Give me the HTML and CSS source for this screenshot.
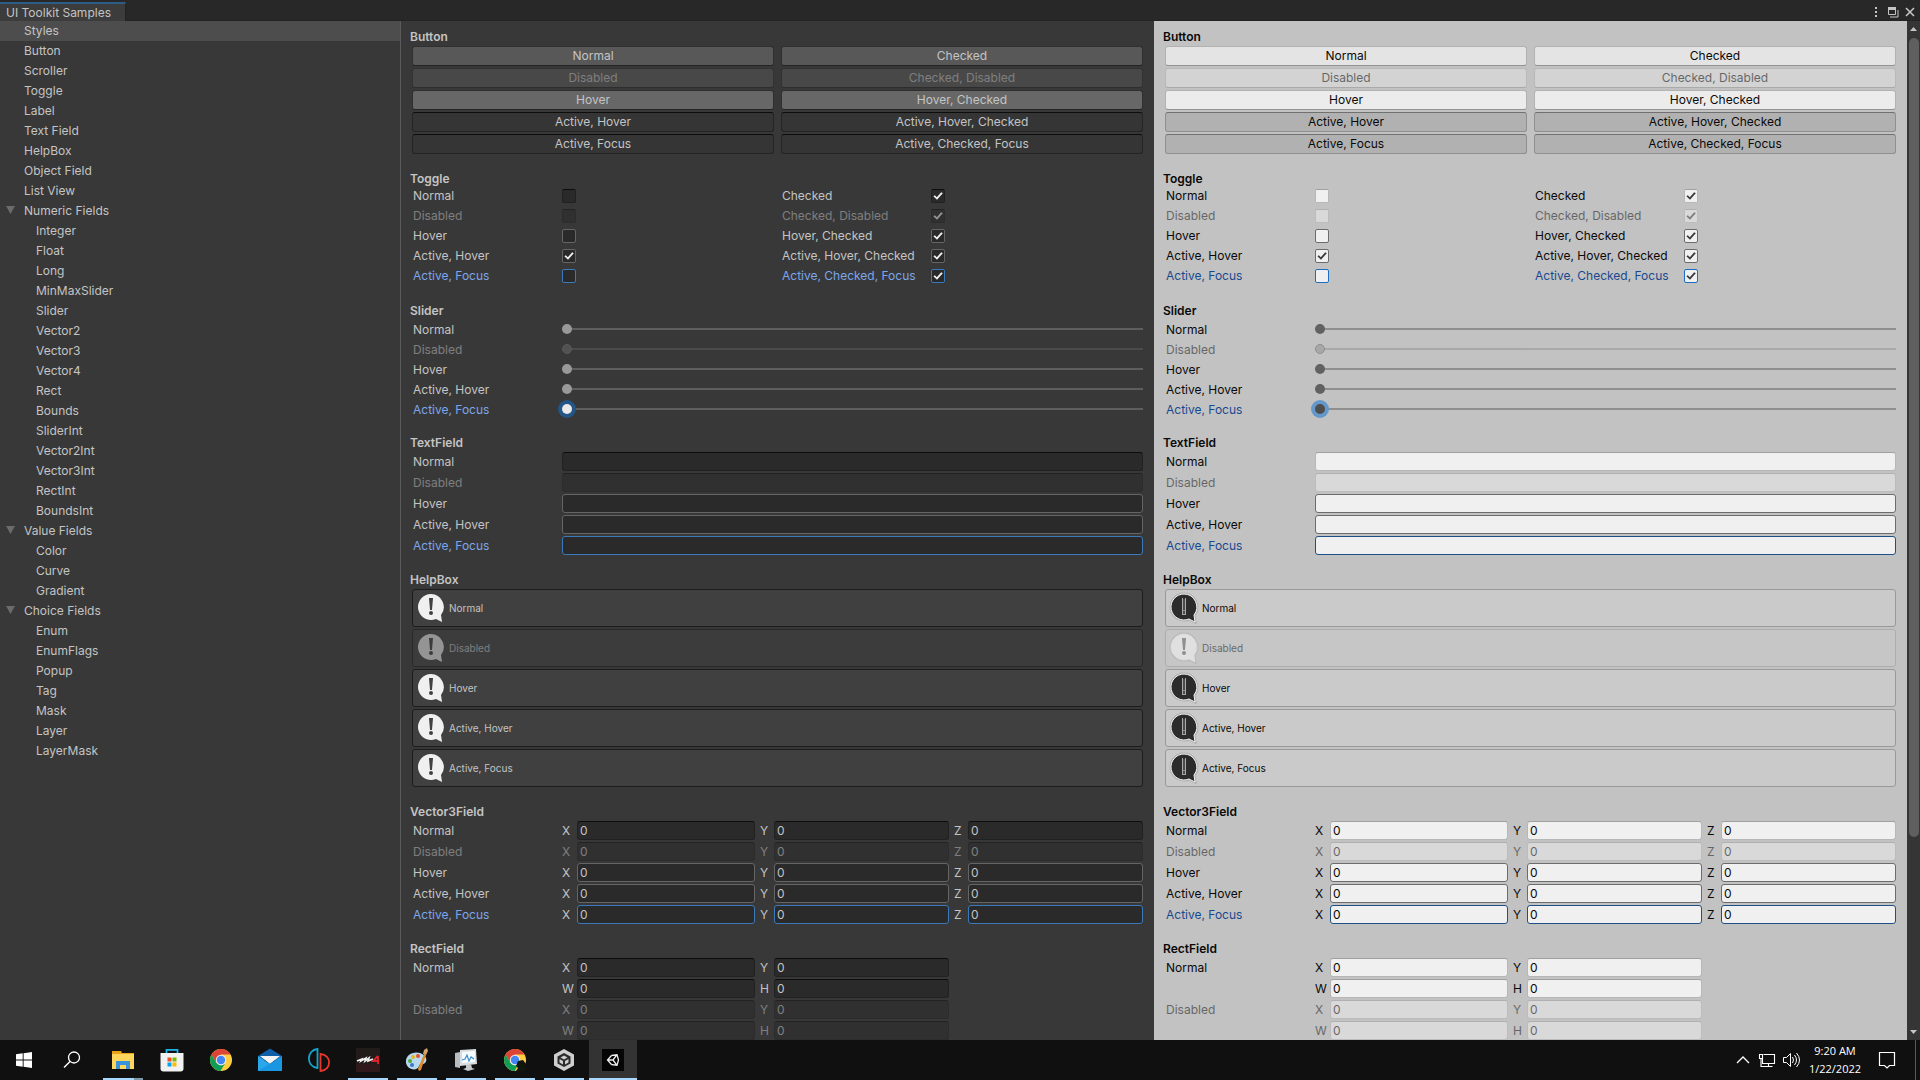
FILE: index.html
```html
<!doctype html>
<html lang="en">
<head>
    <meta charset="UTF-8">
    <meta name="viewport" content="width=device-width, initial-scale=1.0">
    <title>UI Toolkit Samples</title>
    <link rel="stylesheet" href="styles.css">
</head>
<body>
<header class="titlebar">
    <h1 class="tab">UI Toolkit Samples</h1>
    <div class="window_buttons">
        <button type="button" aria-label="Menu"><svg width="14" height="14" viewBox="0 0 14 14"><path d="M6 2h2v2H6zM6 6h2v2H6zM6 10h2v2H6z" fill="#c4c4c4"/></svg></button>
        <button type="button" aria-label="Maximize"><svg width="14" height="14" viewBox="0 0 14 14"><path d="M2.5 3v6.5h7V3M12 5v7H4" fill="none" stroke="#c4c4c4"/><path d="M2 2h8v3H2z" fill="#c4c4c4"/></svg></button>
        <button type="button" aria-label="Close"><svg width="14" height="14" viewBox="0 0 14 14"><path d="M3 3l8 8M11 3l-8 8" fill="none" stroke="#c4c4c4" stroke-width="1.6"/></svg></button>
    </div>
</header>

<main class="window">
    <nav class="tree">
        <ul>
            <li><a href="#styles" class="selected">Styles</a></li>
            <li><a href="#button">Button</a></li>
            <li><a href="#scroller">Scroller</a></li>
            <li><a href="#toggle">Toggle</a></li>
            <li><a href="#label">Label</a></li>
            <li><a href="#textfield">Text Field</a></li>
            <li><a href="#helpbox">HelpBox</a></li>
            <li><a href="#objectfield">Object Field</a></li>
            <li><a href="#listview">List View</a></li>
            <li>
                <a href="#numeric" class="group">Numeric Fields</a>
                <ul>
                    <li><a href="#integer">Integer</a></li>
                    <li><a href="#float">Float</a></li>
                    <li><a href="#long">Long</a></li>
                    <li><a href="#minmaxslider">MinMaxSlider</a></li>
                    <li><a href="#slider">Slider</a></li>
                    <li><a href="#vector2">Vector2</a></li>
                    <li><a href="#vector3">Vector3</a></li>
                    <li><a href="#vector4">Vector4</a></li>
                    <li><a href="#rect">Rect</a></li>
                    <li><a href="#bounds">Bounds</a></li>
                    <li><a href="#sliderint">SliderInt</a></li>
                    <li><a href="#vector2int">Vector2Int</a></li>
                    <li><a href="#vector3int">Vector3Int</a></li>
                    <li><a href="#rectint">RectInt</a></li>
                    <li><a href="#boundsint">BoundsInt</a></li>
                </ul>
            </li>
            <li>
                <a href="#value" class="group">Value Fields</a>
                <ul>
                    <li><a href="#color">Color</a></li>
                    <li><a href="#curve">Curve</a></li>
                    <li><a href="#gradient">Gradient</a></li>
                </ul>
            </li>
            <li>
                <a href="#choice" class="group">Choice Fields</a>
                <ul>
                    <li><a href="#enum">Enum</a></li>
                    <li><a href="#enumflags">EnumFlags</a></li>
                    <li><a href="#popup">Popup</a></li>
                    <li><a href="#tag">Tag</a></li>
                    <li><a href="#mask">Mask</a></li>
                    <li><a href="#layer">Layer</a></li>
                    <li><a href="#layermask">LayerMask</a></li>
                </ul>
            </li>
        </ul>
    </nav>

    <div class="panel dark"></div>
    <div class="panel light"></div>

    <div class="scroller">
        <button type="button" class="up" aria-label="Scroll up"></button>
        <div class="track"><div class="thumb"></div></div>
        <button type="button" class="down" aria-label="Scroll down"></button>
    </div>
</main>

<footer class="taskbar">
    <div class="apps">
        <button type="button" aria-label="Start"><svg width="24" height="24" viewBox="0 0 24 24"><path d="M4 6.300l6.700-1v6.200H4zM11.600 5.200L20 4v7.500h-8.400zM4 12.500h6.700v6.200L4 17.700zM11.600 12.500H20V20l-8.400-1.200z" fill="#fff"/></svg></button>
        <button type="button" class="search" aria-label="Search"><svg width="24" height="24" viewBox="0 0 24 24"><circle cx="14" cy="9.500" r="5.500" fill="none" stroke="#fff" stroke-width="1.300"/><path d="M10 13.500l-6 6" stroke="#fff" stroke-width="1.500"/></svg></button>
        <button type="button" class="open stacked" aria-label="File Explorer"><svg width="24" height="24" viewBox="0 0 24 24"><path d="M1 3h9l1 2h12v15H1z" fill="#e8a317"/><path d="M1 6h22v15H1z" fill="#ffd65c"/><path d="M5 21v-8h14v8h-4v-4H9v4z" fill="#3b92d8"/></svg></button>
        <button type="button" aria-label="Store"><svg width="24" height="24" viewBox="0 0 24 24"><path d="M6.500 5V1.800h11V5" fill="none" stroke="#1fb2ec" stroke-width="1.800"/><path d="M.5 5h23v15.500q0 3-3 3h-17q-3 0-3-3z" fill="#f1f1f1"/><path d="M7.500 9.500h4v4h-4z" fill="#f25022"/><path d="M12.500 9.500h4v4h-4z" fill="#7fba00"/><path d="M7.500 14.500h4v4h-4z" fill="#00a4ef"/><path d="M12.500 14.500h4v4h-4z" fill="#ffb900"/></svg></button>
        <button type="button" aria-label="Chrome"><svg width="24" height="24" viewBox="0 0 24 24"><circle cx="12" cy="12" r="11" fill="#ffcd40"/><path d="M2.500 6.500A11 11 0 0 1 21.500 6.500H12L7.200 14.700z" fill="#db4437"/><path d="M2.500 6.500L7.200 14.700 12 17.500 16 15.500 11.500 23A11 11 0 0 1 2.500 6.500z" fill="#0f9d58"/><circle cx="12" cy="12" r="5.200" fill="#eee"/><circle cx="12" cy="12" r="4.200" fill="#4285f4"/></svg></button>
        <button type="button" aria-label="Mail"><svg width="26" height="24" viewBox="0 0 26 24"><path d="M1 8L13 .500 25 8v4H1z" fill="#0f5ea8"/><path d="M3 8h20l-10 8z" fill="#f3f3f3"/><path d="M1 8l12 8 12-8v15H1z" fill="#28a8ea"/><path d="M1 23L25 8v15z" fill="#1490df" opacity=".7"/></svg></button>
        <button type="button" aria-label="Joy"><svg width="24" height="26" viewBox="0 0 24 26"><path d="M10.500 2v19C-1 20-1 3 10.500 2z" fill="none" stroke="#15a5c9" stroke-width="1.800"/><path d="M13.500 7v17C25 23 25 8 13.500 7z" fill="none" stroke="#e8352b" stroke-width="1.800"/></svg></button>
        <button type="button" class="open" aria-label="Game"><svg width="24" height="24" viewBox="0 0 24 24"><path d="M0 0h24v24H0z" fill="#211b1a"/><path d="M0 16h24v8H0z" fill="#30191a"/><path d="M1 13l5-2-1 2 5-3-1 3 4-3-1 3 5-2" fill="none" stroke="#f2f2f2" stroke-width="1.600"/><path d="M22 8v8M22 8l-5 5h6" fill="none" stroke="#e0222b" stroke-width="1.800"/></svg></button>
        <button type="button" class="open" aria-label="Paint"><svg width="24" height="24" viewBox="0 0 24 24"><path d="M1 15C0 7 8 3 15 5c6 2 8 7 5 10-2 2-5 0-6 3-1 5-11 5-13-3z" fill="#b7d9f0"/><circle cx="5" cy="13" r="2" fill="#4fa83d"/><circle cx="8" cy="9" r="2" fill="#e6b422"/><circle cx="13" cy="8" r="2" fill="#e2512c"/><circle cx="7" cy="17" r="2" fill="#3c79c8"/><path d="M13 21L19 6l2 1-5 15-2 1z" fill="#e08a2c"/><path d="M18 6l1-4 3-2 1 3-2 4z" fill="#cfa46b"/></svg></button>
        <button type="button" class="open" aria-label="Monitor"><svg width="24" height="24" viewBox="0 0 24 24"><path d="M1 5l5-1v16l-5-1z" fill="#b9bdc1"/><path d="M6 2l16-1 1 15-17 2z" fill="#d9dde0"/><path d="M8 4l13-1v11L8 15z" fill="#f6fbff"/><path d="M8 12l3-1 2-4 2 6 2-4 3 2" fill="none" stroke="#3c8fce" stroke-width="1.200"/><path d="M12 17l5-1 1 4 3 1-7 2-5-2 3-1z" fill="#c5c9cc"/></svg></button>
        <button type="button" class="open" aria-label="Chrome profile"><svg width="24" height="24" viewBox="0 0 24 24"><circle cx="12" cy="12" r="11" fill="#ffcd40"/><path d="M2.500 6.500A11 11 0 0 1 21.500 6.500H12L7.200 14.700z" fill="#db4437"/><path d="M2.500 6.500L7.200 14.700 12 17.500 16 15.500 11.500 23A11 11 0 0 1 2.500 6.500z" fill="#0f9d58"/><circle cx="12" cy="12" r="5.200" fill="#eee"/><circle cx="12" cy="12" r="4.200" fill="#4285f4"/><path d="M13 18l2-5 5-1 3 4-1 7h-9l2-3z" fill="#12160f"/></svg></button>
        <button type="button" class="open" aria-label="Unity Hub"><svg width="24" height="24" viewBox="0 0 24 24"><path d="M12 1l10 5.500v11L12 23 2 17.500v-11z" fill="#cfcfcf"/><path d="M12 5l6.500 3.500v7L12 19l-6.500-3.500v-7z" fill="#2b2b2b"/><path d="M12 7.500l3.500 2L12 11.500l-3.500-2zM7.500 11l3.500 2v3.500l-3.500-2zM16.500 11v3.500l-3.500 2V13z" fill="#cfcfcf"/></svg></button>
        <button type="button" class="open current" aria-label="Unity"><svg width="24" height="24" viewBox="0 0 24 24"><path d="M1 1h22v22H1z" fill="#050505"/><path d="M10.500 7.500L6.500 12l4 4.500M10.500 7.500l5.500-.8 1.500 5.300-1.500 5.300-5.500-.8M6.500 12H12l4-5.300M12 12l4 5.300" fill="none" stroke="#eee" stroke-width="1.300"/></svg></button>
    </div>
    <div class="tray">
        <button type="button" aria-label="Show hidden icons"><svg width="24" height="24" viewBox="0 0 24 24"><path d="M6 15l6-6 6 6" fill="none" stroke="#fff" stroke-width="1.300"/></svg></button>
        <button type="button" aria-label="Network"><svg width="24" height="24" viewBox="0 0 24 24"><path d="M8.500 6.500h11v9h-12v-5M4.500 6.500h3v4h-3zM6 10v8.500h8M13.500 15.500v3M9.500 18.500h8" fill="none" stroke="#fff" stroke-width="1.100"/></svg></button>
        <button type="button" aria-label="Volume"><svg width="24" height="24" viewBox="0 0 24 24"><path d="M4.500 9.500h3l4-4v13l-4-4h-3zM13.500 9q2 3 0 6M15.500 7q4 5 0 10M17.500 5q6 7 0 14" fill="none" stroke="#fff"/></svg></button>
        <div class="clock"><time>9:20 AM</time><time>1/22/2022</time></div>
        <button type="button" class="notes" aria-label="Notifications"><svg width="24" height="24" viewBox="0 0 24 24"><path d="M4.500 4.500h15v13h-5l-2.500 2.500-2.500-2.500h-5z" fill="none" stroke="#fff" stroke-width="1.200"/></svg></button>
    </div>
</footer>

<script src="samples.js"></script>
</body>
</html>
```
FILE: samples.js
```js
const states = ['Normal', 'Disabled', 'Hover', 'Active, Hover', 'Active, Focus'];
const checkedStates = ['Checked', 'Checked, Disabled', 'Hover, Checked', 'Active, Hover, Checked', 'Active, Checked, Focus'];

// "Active, Hover" -> "active hover"
function stateClass(name) {
    return name.toLowerCase().replace(/,/g, '');
}

function disabled(name) {
    return name.includes('Disabled') ? ' disabled' : '';
}

function section(title, rows, kind) {
    return `<section class="sample ${kind}"><h2>${title}</h2><div class="rows">${rows.join('')}</div></section>`;
}

function button(name) {
    return `<button type="button" class="btn ${stateClass(name)}"${disabled(name)}>${name}</button>`;
}

function toggle(name) {
    const checked = name.includes('Checked') || name === 'Active, Hover' ? ' checked' : '';
    return `<label class="field ${stateClass(name)}"><span>${name}</span><input type="checkbox"${checked}${disabled(name)}></label>`;
}

function slider(name) {
    return `<label class="field ${stateClass(name)}"><span>${name}</span><input type="range" min="0" max="10" value="0"${disabled(name)}></label>`;
}

function textField(name) {
    return `<label class="field ${stateClass(name)}"><span>${name}</span><input type="text"${disabled(name)}></label>`;
}

function helpBox(name) {
    const bubble = 'M16 2a13 13 0 1 0 5 25l6 3-1-7A13 13 0 0 0 16 2z';
    return `<div class="help ${stateClass(name)}">
        <svg width="32" height="32" viewBox="0 0 32 32">
            <path class="bubble_edge" d="${bubble}"/>
            <path class="bubble" d="${bubble}"/>
            <path class="mark" d="M14 6h4l-1 12h-2z"/>
            <circle class="mark" cx="16" cy="21" r="2"/>
            <path class="bars" d="M14.5 6v17M17.500 6v17M14 18.500h4M14 22.500h4"/>
            <path class="bars core" d="M16 7v15"/>
        </svg>
        <p>${name}</p>
    </div>`;
}

function axes(name, letters) {
    const cells = letters.map(l => l
        ? `<label class="axis"><span>${l}</span><input type="text" value="0"${disabled(name)}></label>`
        : '<div class="axis"></div>');
    return `<div class="axes">${cells.join('')}</div>`;
}

function composite(name, lines) {
    return `<div class="field ${stateClass(name)}" role="group" aria-label="${name}"><span>${name}</span>
        <div class="lines">${lines.map(line => axes(name, line)).join('')}</div></div>`;
}

document.querySelectorAll('.panel').forEach(panel => {
    const pairs = build => states.map((s, i) => build(s) + build(checkedStates[i]));

    panel.innerHTML =
        section('Button', pairs(button), 'two_columns') +
        section('Toggle', pairs(toggle), 'two_columns toggles') +
        section('Slider', states.map(slider), 'sliders') +
        section('TextField', states.map(textField), 'texts') +
        section('HelpBox', states.map(helpBox), 'helps') +
        section('Vector3Field', states.map(s => composite(s, [['X', 'Y', 'Z']])), 'texts') +
        section('RectField', states.slice(0, 2).map(s => composite(s, [['X', 'Y', ''], ['W', 'H', '']])), 'texts');
});
```
FILE: styles.css
```css
* {
    box-sizing: border-box;
}

body {
    margin: 0;
    height: 100vh;
    display: flex;
    flex-direction: column;
    overflow: hidden;
    background-color: #383838;
    color: #c4c4c4;
    font-family: Inter, "Liberation Sans", sans-serif;
    font-size: 12px;
}

button, input {
    font: inherit;
    color: inherit;
    margin: 0;
}

h1, h2, p, ul {
    margin: 0;
    padding: 0;
}

svg {
    display: block;
}

/* title bar */

.titlebar {
    display: flex;
    justify-content: space-between;
    height: 21px;
    flex: none;
    background-color: #282828;
    border-bottom: 1px solid #232323;
}

.tab {
    margin-top: 2px;
    margin-bottom: -1px;
    padding: 0 14px 0 6px;
    border-top: 2px solid #2c5d87;
    border-right: 1px solid #232323;
    background-color: #3c3c3c;
    font-size: 12px;
    font-weight: normal;
    line-height: 17px;
}

.window_buttons {
    display: flex;
    gap: 3px;
    padding: 3px 3px 0 0;
}

.window_buttons button {
    padding: 0;
    border: 0;
    background: none;
}

/* main area */

.window {
    flex: 1;
    min-height: 0;
    display: grid;
    grid-template-columns: 401px 1fr 1fr 13px;
}

.tree {
    border-right: 1px solid #5a5a5a;
}

.tree ul {
    list-style: none;
}

.tree a {
    display: block;
    height: 20px;
    padding-left: 24px;
    line-height: 20px;
    color: inherit;
    text-decoration: none;
}

.tree ul ul a {
    padding-left: 36px;
}

.tree .selected {
    background-color: #4d4d4d;
}

.tree .group {
    display: flex;
    gap: 9px;
    padding-left: 6px;
}

.tree .group::before {
    content: "";
    width: 9px;
    height: 8px;
    margin-top: 5px;
    background-color: #6b6b6b;
    clip-path: polygon(0 0, 100% 0, 50% 100%);
}

.panel {
    min-width: 0;
    padding: 9px 11px 0 8px;
    overflow: hidden;
}

.dark {
    --bg: #383838;
    --text: #c4c4c4;
    --focus-text: #7ba6ec;
    --btn: #585858;
    --btn-border: #303030;
    --btn-bottom: #242424;
    --btn-hover: #676767;
    --btn-active: #353535;
    --btn-active-border: #242424;
    --btn-active-top: #0d0d0d;
    --input: #2a2a2a;
    --input-border: #212121;
    --input-top: #0d0d0d;
    --input-hover: #656565;
    --input-focus: #3a79bb;
    --toggle-focus: #3a79bb;
    --check: #f0f0f0;
    --rail: #5e5e5e;
    --knob: #999999;
    --knob-focus: #eaeaea;
    --knob-off: #6c6c6c;
    --knob-off-border: #7c7c7c;
    --halo: #235587;
    --help: #404040;
    --help-border: #1c1c1c;
    --bubble: #f0f0f0;
    --bubble-edge: none;
    --mark: #404040;
}

.light {
    --bg: #c2c2c2;
    --text: #090909;
    --focus-text: #18498f;
    --btn: #e4e4e4;
    --btn-border: #b2b2b2;
    --btn-bottom: #939393;
    --btn-hover: #ececec;
    --btn-active: #b1b1b1;
    --btn-active-border: #8f8f8f;
    --btn-active-top: #707070;
    --input: #f0f0f0;
    --input-border: #b7b7b7;
    --input-top: #a0a0a0;
    --input-hover: #6c6c6c;
    --input-focus: #1d5087;
    --toggle-focus: #1a6fc4;
    --check: #3a3a3a;
    --rail: #8f8f8f;
    --knob: #616161;
    --knob-focus: #4d4d4d;
    --knob-off: #909090;
    --knob-off-border: #5c5c5c;
    --halo: #6498cb;
    --help: #cacaca;
    --help-border: #999999;
    --bubble: #2b2b2b;
    --bubble-edge: #b0b0b0;
    --mark: none;
}

.panel {
    background-color: var(--bg);
    color: var(--text);
}

.sample {
    margin-bottom: 17px;
}

.sample h2 {
    margin-bottom: 1px;
    padding-left: 1px;
    font-size: 12px;
    font-weight: 600;
    line-height: 14px;
}

.rows {
    padding-left: 3px;
}

.two_columns .rows {
    display: grid;
    grid-template-columns: 1fr 1fr;
    column-gap: 7px;
}

/* buttons */

.btn {
    height: 20px;
    margin: 1px 0;
    padding: 0;
    border: 1px solid var(--btn-border);
    border-bottom-color: var(--btn-bottom);
    border-radius: 3px;
    background-color: var(--btn);
    line-height: 18px;
}

.btn.hover {
    background-color: var(--btn-hover);
}

.btn.active {
    background-color: var(--btn-active);
    border-color: var(--btn-active-border);
    border-top-color: var(--btn-active-top);
}

.btn:disabled,
.field.disabled > span,
.field.disabled .axis span,
.field.disabled input,
.help.disabled {
    opacity: 0.5;
}

/* fields */

.field {
    display: flex;
}

.field > span {
    width: 150px;
    padding-left: 1px;
    flex: none;
    line-height: 21px;
}

.field.focus > span {
    color: var(--focus-text);
}

.toggles .field,
.sliders .field {
    height: 20px;
}

.toggles .field > span {
    line-height: 18px;
}

input[type="checkbox"] {
    appearance: none;
    display: grid;
    place-items: center;
    width: 14px;
    height: 14px;
    margin-top: 2px;
    border: 1px solid var(--input-border);
    border-top-color: var(--input-top);
    border-radius: 2px;
    background-color: var(--input);
}

input[type="checkbox"]:checked::before {
    content: "";
    width: 10px;
    height: 8px;
    background-color: var(--check);
    clip-path: polygon(4% 54%, 18% 40%, 38% 66%, 82% 4%, 98% 16%, 40% 96%);
}

input[type="text"] {
    flex: 1;
    min-width: 0;
    height: 19px;
    margin: 1px 0;
    padding: 0 2px;
    border: 1px solid var(--input-border);
    border-top-color: var(--input-top);
    border-radius: 3px;
    background-color: var(--input);
}

.hover input[type] {
    border-color: var(--input-hover);
}

.focus input[type] {
    border-color: var(--input-focus);
}

.focus input[type="checkbox"] {
    border-color: var(--toggle-focus);
}

input[type="range"] {
    appearance: none;
    flex: 1;
    min-width: 0;
    height: 20px;
    background: none;
}

input[type="range"]::-webkit-slider-runnable-track {
    height: 2px;
    background-color: var(--rail);
}

input[type="range"]::-webkit-slider-thumb {
    appearance: none;
    width: 10px;
    height: 10px;
    margin-top: -4px;
    border-radius: 50%;
    background-color: var(--knob);
}

input[type="range"]:disabled::-webkit-slider-thumb {
    border: 1px solid var(--knob-off-border);
    background-color: var(--knob-off);
}

.focus input[type="range"]::-webkit-slider-thumb {
    background-color: var(--knob-focus);
    box-shadow: 0 0 0 4px var(--halo);
}

/* vector and rect */

.lines {
    flex: 1;
    min-width: 0;
}

.axes {
    display: flex;
    gap: 5px;
}

.axis {
    display: flex;
    flex: 1 1 0;
    min-width: 0;
    line-height: 21px;
}

.axis:first-child {
    flex-basis: 4px;
}

.axis span {
    width: 14px;
    flex: none;
}

.axis:first-child span {
    width: 15px;
}

/* help boxes */

.help {
    display: flex;
    align-items: center;
    gap: 2px;
    margin: 1px 0;
    padding: 2px;
    border: 1px solid var(--help-border);
    border-radius: 3px;
    background-color: var(--help);
    font-size: 10px;
}

.helps .rows {
    display: flow-root;
}

.help + .help {
    margin-top: 2px;
}

.bubble {
    fill: var(--bubble);
}

.bubble_edge {
    fill: none;
    stroke: var(--bubble-edge);
    stroke-width: 3;
}

.light .bubble {
    stroke: #f4f4f4;
}

.mark {
    fill: var(--mark);
}

.bars {
    display: none;
    fill: none;
    stroke: #a8a8a8;
}

.light .bars {
    display: inline;
}

.light .core {
    stroke: #6a6a6a;
}

.light .disabled .bars {
    display: none;
}

.light .disabled .bubble {
    fill: #ffffff;
}

.light .disabled .mark {
    fill: #606060;
}

/* scroller */

.scroller {
    display: flex;
    flex-direction: column;
    align-items: center;
    background-color: #353535;
}

.scroller button {
    width: 7px;
    height: 4px;
    margin: 6px 0;
    padding: 0;
    border: 0;
    background-color: #c4c4c4;
    clip-path: polygon(50% 0, 100% 100%, 0 100%);
}

.scroller .down {
    clip-path: polygon(0 0, 100% 0, 50% 100%);
}

.track {
    flex: 1;
    width: 10px;
}

.thumb {
    height: 81%;
    margin-top: 1px;
    border-radius: 5px;
    background-color: #5f5f5f;
}

/* taskbar */

.taskbar {
    display: flex;
    justify-content: space-between;
    height: 40px;
    flex: none;
    background-color: #101010;
}

.taskbar button {
    display: flex;
    align-items: center;
    justify-content: center;
    padding: 0;
    border: 0;
    background: none;
}

.apps {
    display: flex;
    gap: 1px;
}

.apps button {
    position: relative;
    width: 48px;
}

.apps .search {
    margin: 0 2px 0 -1px;
}

.apps .open::after {
    content: "";
    position: absolute;
    left: 4px;
    right: 4px;
    bottom: 0;
    height: 2px;
    background-color: #a6d8ff;
}

.apps .stacked::after {
    background: linear-gradient(90deg, #a6d8ff 31px, #7c98ab 31px);
}

.apps .current {
    background-color: #333333;
}

.apps .current::after {
    left: 0;
    right: 0;
}

.tray {
    display: flex;
    padding-right: 4px;
}

.tray button {
    width: 24px;
}

.clock {
    display: flex;
    flex-direction: column;
    align-items: center;
    width: 64px;
    padding-top: 2px;
    color: #ffffff;
    font-family: "Open Sans", sans-serif;
    font-size: 11px;
    line-height: 18px;
}

.tray .notes {
    width: 49px;
    border-right: 1px solid #5a5a5a;
    padding-right: 8px;
}
```
